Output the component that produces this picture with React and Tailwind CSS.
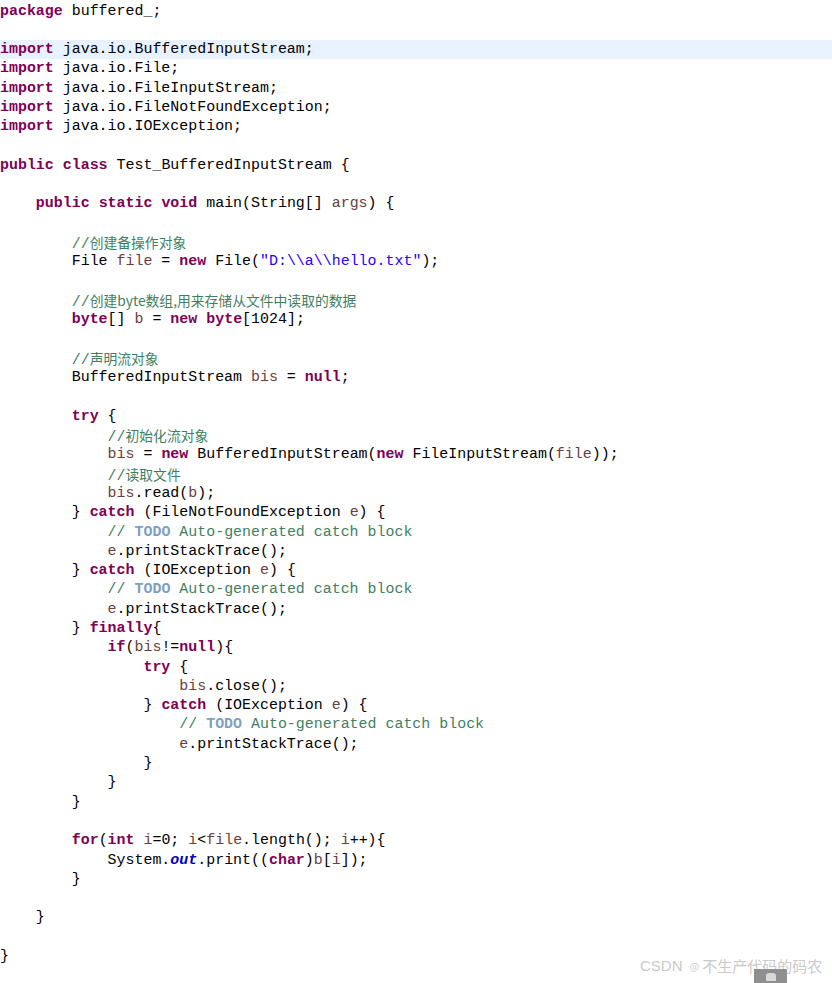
import React from "react";

const cls = {
  p: "text-black",
  k: "text-[#7f0055] font-bold",
  v: "text-[#6a3e3e]",
  c: "text-[#3f7f5f]",
  t: "text-[#7f9fbf] font-bold",
  s: "text-[#2a00ff]",
  f: "text-[#0000c0] font-bold italic",
  z: "text-[#3f7f5f] text-[13.8px] [font-family:'Noto_Sans_CJK_SC','Noto_Sans',sans-serif]",
};

const I = (n) => " ".repeat(n * 4);

const lines = [
  [["package", "k"], [" buffered_;", "p"]],
  [],
  [["import", "k"], [" java.io.BufferedInputStream;", "p"]],
  [["import", "k"], [" java.io.File;", "p"]],
  [["import", "k"], [" java.io.FileInputStream;", "p"]],
  [["import", "k"], [" java.io.FileNotFoundException;", "p"]],
  [["import", "k"], [" java.io.IOException;", "p"]],
  [],
  [["public", "k"], [" ", "p"], ["class", "k"], [" Test_BufferedInputStream {", "p"]],
  [],
  [[I(1), "p"], ["public", "k"], [" ", "p"], ["static", "k"], [" ", "p"], ["void", "k"], [" main(String[] ", "p"], ["args", "v"], [") {", "p"]],
  [],
  [[I(2), "p"], ["//", "c"], ["创建备操作对象", "z"]],
  [[I(2), "p"], ["File ", "p"], ["file", "v"], [" = ", "p"], ["new", "k"], [" File(", "p"], ['"D:\\\\a\\\\hello.txt"', "s"], [");", "p"]],
  [],
  [[I(2), "p"], ["//", "c"], ["创建byte数组,用来存储从文件中读取的数据", "z"]],
  [[I(2), "p"], ["byte", "k"], ["[] ", "p"], ["b", "v"], [" = ", "p"], ["new", "k"], [" ", "p"], ["byte", "k"], ["[1024];", "p"]],
  [],
  [[I(2), "p"], ["//", "c"], ["声明流对象", "z"]],
  [[I(2), "p"], ["BufferedInputStream ", "p"], ["bis", "v"], [" = ", "p"], ["null", "k"], [";", "p"]],
  [],
  [[I(2), "p"], ["try", "k"], [" {", "p"]],
  [[I(3), "p"], ["//", "c"], ["初始化流对象", "z"]],
  [[I(3), "p"], ["bis", "v"], [" = ", "p"], ["new", "k"], [" BufferedInputStream(", "p"], ["new", "k"], [" FileInputStream(", "p"], ["file", "v"], ["));", "p"]],
  [[I(3), "p"], ["//", "c"], ["读取文件", "z"]],
  [[I(3), "p"], ["bis", "v"], [".read(", "p"], ["b", "v"], [");", "p"]],
  [[I(2), "p"], ["} ", "p"], ["catch", "k"], [" (FileNotFoundException ", "p"], ["e", "v"], [") {", "p"]],
  [[I(3), "p"], ["// ", "c"], ["TODO", "t"], [" Auto-generated catch block", "c"]],
  [[I(3), "p"], ["e", "v"], [".printStackTrace();", "p"]],
  [[I(2), "p"], ["} ", "p"], ["catch", "k"], [" (IOException ", "p"], ["e", "v"], [") {", "p"]],
  [[I(3), "p"], ["// ", "c"], ["TODO", "t"], [" Auto-generated catch block", "c"]],
  [[I(3), "p"], ["e", "v"], [".printStackTrace();", "p"]],
  [[I(2), "p"], ["} ", "p"], ["finally", "k"], ["{", "p"]],
  [[I(3), "p"], ["if", "k"], ["(", "p"], ["bis", "v"], ["!=", "p"], ["null", "k"], ["){", "p"]],
  [[I(4), "p"], ["try", "k"], [" {", "p"]],
  [[I(5), "p"], ["bis", "v"], [".close();", "p"]],
  [[I(4), "p"], ["} ", "p"], ["catch", "k"], [" (IOException ", "p"], ["e", "v"], [") {", "p"]],
  [[I(5), "p"], ["// ", "c"], ["TODO", "t"], [" Auto-generated catch block", "c"]],
  [[I(5), "p"], ["e", "v"], [".printStackTrace();", "p"]],
  [[I(4), "p"], ["}", "p"]],
  [[I(3), "p"], ["}", "p"]],
  [[I(2), "p"], ["}", "p"]],
  [],
  [[I(2), "p"], ["for", "k"], ["(", "p"], ["int", "k"], [" ", "p"], ["i", "v"], ["=0; ", "p"], ["i", "v"], ["<", "p"], ["file", "v"], [".length(); ", "p"], ["i", "v"], ["++){", "p"]],
  [[I(3), "p"], ["System.", "p"], ["out", "f"], [".print((", "p"], ["char", "k"], [")", "p"], ["b", "v"], ["[", "p"], ["i", "v"], ["]);", "p"]],
  [[I(2), "p"], ["}", "p"]],
  [],
  [[I(1), "p"], ["}", "p"]],
  [],
  [["}", "p"]],
];

export default function App() {
  return (
    <div className="relative w-[832px] h-[983px] overflow-hidden bg-white">
      <div className="flex flex-col pt-[1.5px] [font-family:'Liberation_Mono','Noto_Sans_CJK_SC',monospace] text-[14.95px]">
        {lines.map((segs, i) => (
          <div
            key={i}
            className={
              i === 2
                ? "h-[19.3px] leading-[19.3px] whitespace-pre bg-[#e8f2fe]"
                : "h-[19.3px] leading-[19.3px] whitespace-pre"
            }
          >
            {segs.map(([text, type], j) => (
              <span key={j} className={cls[type]}>
                {text}
              </span>
            ))}
          </div>
        ))}
      </div>
      <div className="absolute left-[640px] top-[955px] flex items-center whitespace-pre text-[15px] leading-[22px] text-[#c9c9c9] [font-family:'Noto_Sans_CJK_SC','Noto_Sans',sans-serif]">
        <span className="[font-family:'Liberation_Sans',sans-serif] font-light">CSDN </span>
        <span className="text-[10px] mx-[3px]">@</span>
        <span>不生产代码的码农</span>
      </div>
      <div className="absolute left-[754px] top-[969px] w-[33px] h-[14px] bg-[#8f8f8f] flex justify-center pt-[4px]">
        <div className="w-[10px] h-[8px] rounded-t-[3px] bg-[#d8d8d8]" />
      </div>
    </div>
  );
}
